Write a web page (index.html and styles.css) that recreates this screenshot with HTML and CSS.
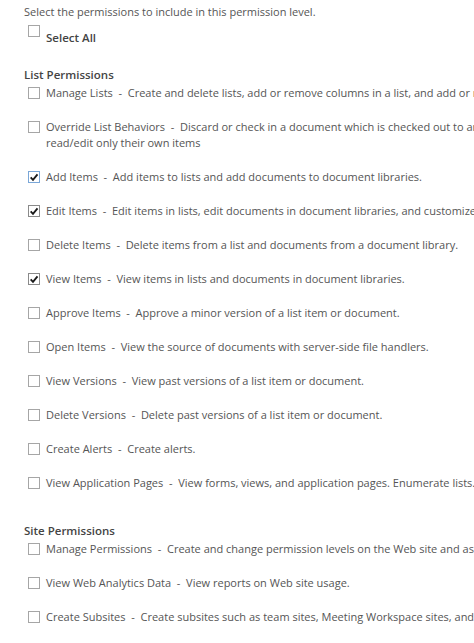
FILE: index.html
```html
<!DOCTYPE html>
<html>
<head>
<meta charset="utf-8">
<link rel="stylesheet" href="styles.css">
</head>
<body>
<div class="page">
  <div class="intro">Select the permissions to include in this permission level.</div>
  <div class="select-all">
    <span class="box"></span>
    <span class="select-all-label">Select All</span>
  </div>

  <div class="group">
    <div class="group-title">List Permissions</div>
    <ul class="perms">
      <li class="perm"><span class="box"></span><span class="label">Manage Lists&nbsp; -&nbsp; Create and delete lists, add or remove columns in a list, and add or remove public views of a list.</span></li>
      <li class="perm"><span class="box"></span><span class="label">Override List Behaviors&nbsp; -&nbsp; Discard or check in a document which is checked out to another user, and change or override settings which allow users to<br>read/edit only their own items</span></li>
      <li class="perm"><span class="box checked focus"><svg viewBox="0 0 12 12"><path d="M2 5.8 L4.8 8.8 L10.2 2.2" /></svg></span><span class="label">Add Items&nbsp; -&nbsp; Add items to lists and add documents to document libraries.</span></li>
      <li class="perm"><span class="box checked"><svg viewBox="0 0 12 12"><path d="M2 5.8 L4.8 8.8 L10.2 2.2" /></svg></span><span class="label">Edit Items&nbsp; -&nbsp; Edit items in lists, edit documents in document libraries, and customize Web Part Pages in document libraries.</span></li>
      <li class="perm"><span class="box"></span><span class="label">Delete Items&nbsp; -&nbsp; Delete items from a list and documents from a document library.</span></li>
      <li class="perm"><span class="box checked"><svg viewBox="0 0 12 12"><path d="M2 5.8 L4.8 8.8 L10.2 2.2" /></svg></span><span class="label">View Items&nbsp; -&nbsp; View items in lists and documents in document libraries.</span></li>
      <li class="perm"><span class="box"></span><span class="label">Approve Items&nbsp; -&nbsp; Approve a minor version of a list item or document.</span></li>
      <li class="perm"><span class="box"></span><span class="label">Open Items&nbsp; -&nbsp; View the source of documents with server-side file handlers.</span></li>
      <li class="perm"><span class="box"></span><span class="label">View Versions&nbsp; -&nbsp; View past versions of a list item or document.</span></li>
      <li class="perm"><span class="box"></span><span class="label">Delete Versions&nbsp; -&nbsp; Delete past versions of a list item or document.</span></li>
      <li class="perm"><span class="box"></span><span class="label">Create Alerts&nbsp; -&nbsp; Create alerts.</span></li>
      <li class="perm"><span class="box"></span><span class="label">View Application Pages&nbsp; -&nbsp; View forms, views, and application pages. Enumerate lists.</span></li>
    </ul>
  </div>

  <div class="group">
    <div class="group-title">Site Permissions</div>
    <ul class="perms">
      <li class="perm"><span class="box"></span><span class="label">Manage Permissions&nbsp; -&nbsp; Create and change permission levels on the Web site and assign permissions to users and groups.</span></li>
      <li class="perm"><span class="box"></span><span class="label">View Web Analytics Data&nbsp; -&nbsp; View reports on Web site usage.</span></li>
      <li class="perm"><span class="box"></span><span class="label">Create Subsites&nbsp; -&nbsp; Create subsites such as team sites, Meeting Workspace sites, and Document Workspace sites.</span></li>
      <li class="perm"><span class="box"></span><span class="label">Manage Web Site&nbsp; -&nbsp; Grants the ability to perform all administration tasks for the Web site as well as manage content.</span></li>
    </ul>
  </div>
</div>
</body>
</html>
```
FILE: styles.css
```css
html, body {
  margin: 0;
  padding: 0;
  overflow: hidden;
  background: #ffffff;
}

body {
  font-family: "Open Sans", "Noto Sans", sans-serif;
  font-size: 11px;
  color: #444444;
}

.page {
  padding: 4px 0 0 24px;
  width: 1100px;
}

.intro {
  line-height: 16px;
  color: #555555;
}

.select-all {
  display: flex;
  align-items: flex-start;
  margin-top: 4px;
  padding-left: 4px;
  height: 20px;
}

.select-all .box {
  margin-top: 1px;
}

.select-all-label {
  font-weight: 600;
  font-size: 11.5px;
  margin-left: 6px;
  margin-top: 6px;
  line-height: 16px;
}

.group {
  margin-top: 23px;
}

.group + .group {
  margin-top: 32px;
}

.group-title {
  font-weight: 600;
  font-size: 11.5px;
  line-height: 16px;
  color: #444444;
}

.perms {
  list-style: none;
  margin: 2px 0 0 0;
  padding: 0 0 0 4px;
}

.perm {
  display: flex;
  align-items: flex-start;
  margin-bottom: 18px;
}

.label {
  margin-left: 6px;
  line-height: 16px;
  white-space: nowrap;
  color: #555555;
}

.box {
  flex: none;
  box-sizing: border-box;
  width: 12px;
  height: 12px;
  margin-top: 2px;
  border: 1px solid #a6a6a6;
  background: #ffffff;
  display: flex;
  align-items: center;
  justify-content: center;
}

.box.checked {
  border-color: #8a8a8a;
}

.box.focus {
  border-color: #7aa7d8;
}

.box svg {
  width: 11px;
  height: 11px;
}

.box svg path {
  fill: none;
  stroke: #1a1a1a;
  stroke-width: 2.2;
  stroke-linecap: butt;
  stroke-linejoin: miter;
}
```
